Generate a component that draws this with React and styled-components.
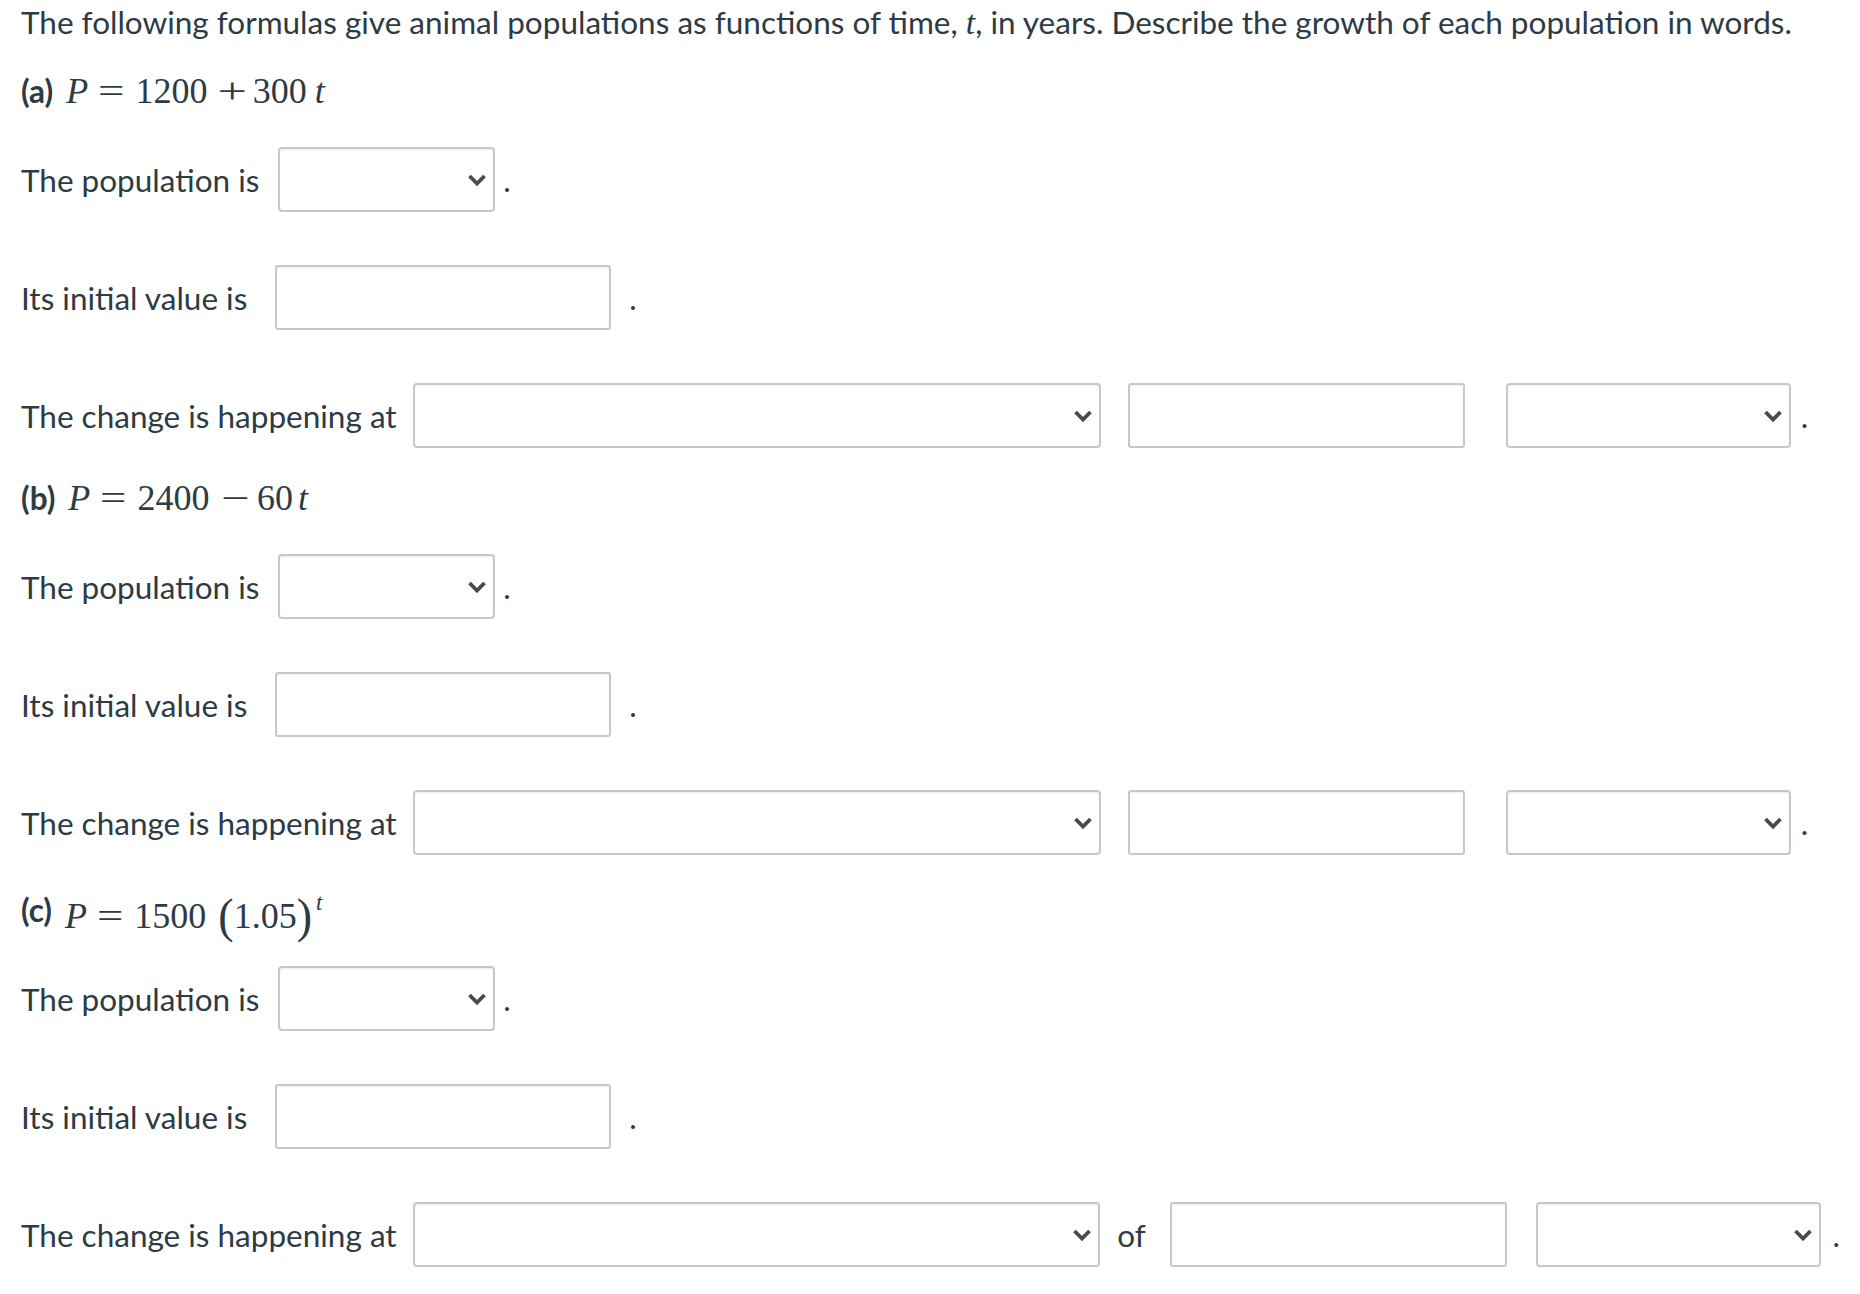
import React from 'react';
import styled, { createGlobalStyle } from 'styled-components';

const GlobalStyle = createGlobalStyle`
  html, body {
    margin: 0;
    padding: 0;
    background: #ffffff;
  }
  body {
    font-family: Lato, "Open Sans", sans-serif;
    color: #2d3b45;
  }
`;

const Page = styled.div`
  padding: 0 20px 24px 21px;
  font-size: 31.5px;
  line-height: 44px;
`;

const Intro = styled.p`
  margin: 0;
`;

const Formula = styled.div`
  margin-top: ${p => p.$top}px;
  height: 40px;
  display: flex;
  align-items: center;
  white-space: nowrap;
`;

const PartLabel = styled.span`
  font-weight: 700;
  margin-right: 13px;
`;

const Math = styled.span`
  font-family: "Liberation Serif", "DejaVu Serif", serif;
  font-size: 36px;
  color: #2d3b45;
`;

const Var = styled.i`
  font-style: italic;
  margin-left: ${p => p.$ml || 0}px;
`;

const Op = styled.span`
  display: inline-block;
  margin: 0 ${p => p.$r}px 0 ${p => p.$l}px;
  transform: scaleX(${p => p.$sx || 1});
`;

const BigParen = styled.span`
  display: inline-block;
  font-size: 46px;
  line-height: 1;
  transform: scaleY(1.05);
  margin: 0 ${p => p.$mr || 0}px 0 ${p => p.$ml || 0}px;
  vertical-align: -3px;
`;

const Sup = styled.sup`
  font-style: italic;
  font-size: 23px;
  vertical-align: 18px;
  margin-left: 4px;
`;

const Row = styled.div`
  margin-top: ${p => p.$top}px;
  height: 65px;
  display: flex;
  align-items: center;
  white-space: nowrap;
`;

const Text = styled.span`
  margin-left: ${p => p.$ml || 0}px;
`;

const DropWrap = styled.span`
  position: relative;
  display: inline-block;
  width: ${p => p.$w}px;
  height: 65px;
  margin-left: ${p => p.$ml || 0}px;
`;

const Select = styled.select`
  appearance: none;
  -webkit-appearance: none;
  box-sizing: border-box;
  width: 100%;
  height: 100%;
  border: 2px solid #c8c8c8;
  border-radius: 4px;
  background: #ffffff;
  box-shadow: inset 0 1px 2px rgba(0, 0, 0, 0.07);
  font: inherit;
  outline: none;
`;

const Chevron = styled.svg`
  position: absolute;
  right: 8px;
  top: 50%;
  transform: translateY(-50%);
  pointer-events: none;
`;

const TextBox = styled.input`
  box-sizing: border-box;
  width: ${p => p.$w}px;
  height: 65px;
  margin-left: ${p => p.$ml || 0}px;
  border: 2px solid #c8c8c8;
  border-radius: 3px;
  background: #ffffff;
  box-shadow: inset 0 1px 2px rgba(0, 0, 0, 0.07);
  font: inherit;
  outline: none;
`;

function Dropdown({ w, ml }) {
  return (
    <DropWrap $w={w} $ml={ml}>
      <Select defaultValue="">
        <option value=""></option>
      </Select>
      <Chevron width="20" height="13" viewBox="0 0 20 13">
        <polyline points="2.5,2.5 10,10 17.5,2.5" fill="none" stroke="#4a4a4a" strokeWidth="3.8" />
      </Chevron>
    </DropWrap>
  );
}

function Part({ label, top, formula, withOf }) {
  return (
    <>
      <Formula $top={top}>
        <PartLabel>{label}</PartLabel>
        <Math>{formula}</Math>
      </Formula>
      <Row $top={36}>
        <Text>The population is</Text>
        <Dropdown w={217} ml={19} />
        <Text $ml={8}>.</Text>
      </Row>
      <Row $top={53}>
        <Text>Its initial value is</Text>
        <TextBox $w={336} $ml={28} />
        <Text $ml={18}>.</Text>
      </Row>
      <Row $top={53}>
        <Text>The change is happening at</Text>
        <Dropdown w={688} ml={16} />
        {withOf ? (
          <>
            <Text $ml={17}>of</Text>
            <TextBox $w={337} $ml={24} />
            <Dropdown w={285} ml={29} />
            <Text $ml={12}>.</Text>
          </>
        ) : (
          <>
            <TextBox $w={337} $ml={27} />
            <Dropdown w={285} ml={41} />
            <Text $ml={10}>.</Text>
          </>
        )}
      </Row>
    </>
  );
}

const Eq = () => <Op $sx={1.3} $l={13} $r={14}>=</Op>;

export default function App() {
  return (
    <>
      <GlobalStyle />
      <Page>
        <Intro>
          The following formulas give animal populations as functions of time,{' '}
          <Math as="i" style={{ fontSize: 34 }}>t</Math>, in years. Describe the growth of each
          population in words.
        </Intro>
        <Part
          label="(a)"
          top={26}
          formula={
            <>
              <Var>P</Var>
              <Eq />1200<Op $sx={1.45} $l={15} $r={10}>+</Op>300<Var $ml={8}>t</Var>
            </>
          }
        />
        <Part
          label="(b)"
          top={30}
          formula={
            <>
              <Var>P</Var>
              <Eq />2400<Op $sx={1.4} $l={15} $r={12}>−</Op>60<Var $ml={5}>t</Var>
            </>
          }
        />
        <Part
          label="(c)"
          top={35}
          withOf
          formula={
            <>
              <Var>P</Var>
              <Eq />1500
              <BigParen $ml={12}>(</BigParen>1.05<BigParen>)</BigParen>
              <Sup>t</Sup>
            </>
          }
        />
      </Page>
    </>
  );
}
